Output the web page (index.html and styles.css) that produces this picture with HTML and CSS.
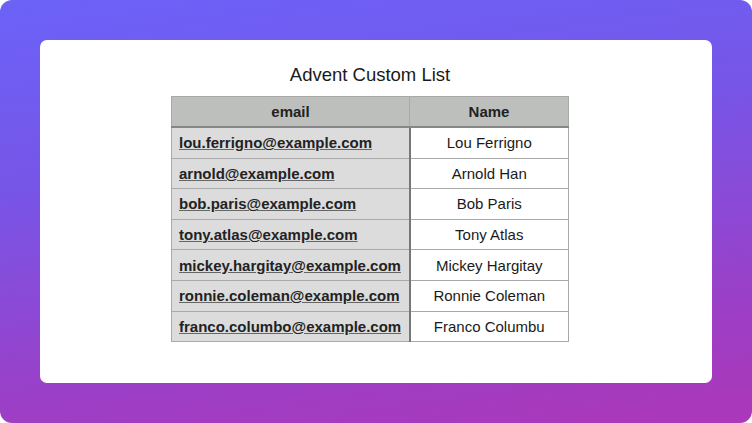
FILE: index.html
```html
<!DOCTYPE html>
<html>
<head>
<meta charset="utf-8">
<link rel="stylesheet" href="styles.css">
</head>
<body>
<div class="frame">
  <div class="card">
    <h1 class="title">Advent Custom List</h1>
    <table class="list">
      <thead>
        <tr><th class="col-email">email</th><th class="col-name">Name</th></tr>
      </thead>
      <tbody>
        <tr><td class="email"><a href="#">lou.ferrigno@example.com</a></td><td class="name">Lou Ferrigno</td></tr>
        <tr><td class="email"><a href="#">arnold@example.com</a></td><td class="name">Arnold Han</td></tr>
        <tr><td class="email"><a href="#">bob.paris@example.com</a></td><td class="name">Bob Paris</td></tr>
        <tr><td class="email"><a href="#">tony.atlas@example.com</a></td><td class="name">Tony Atlas</td></tr>
        <tr><td class="email"><a href="#">mickey.hargitay@example.com</a></td><td class="name">Mickey Hargitay</td></tr>
        <tr><td class="email"><a href="#">ronnie.coleman@example.com</a></td><td class="name">Ronnie Coleman</td></tr>
        <tr><td class="email"><a href="#">franco.columbo@example.com</a></td><td class="name">Franco Columbu</td></tr>
      </tbody>
    </table>
  </div>
</div>
</body>
</html>
```

FILE: styles.css
```css
html, body {
  margin: 0;
  padding: 0;
  background: #ffffff;
}
body {
  font-family: "Liberation Sans", Arial, Helvetica, sans-serif;
  color: #222;
}
.frame {
  width: 752px;
  height: 423px;
  box-sizing: border-box;
  padding: 40px;
  border-radius: 12px;
  background: linear-gradient(172deg, #6b62f8 0%, #7656e8 35%, #9a40c8 75%, #ad37b8 100%);
}
.card {
  height: 343px;
  box-sizing: border-box;
  padding-right: 12px;
  background: #ffffff;
  border-radius: 7px;
  display: flex;
  flex-direction: column;
  align-items: center;
}
.title {
  margin: 24px 0 0 0;
  font-size: 18.5px;
  font-weight: normal;
  line-height: 22px;
  color: #1a1a1a;
}
.list {
  margin-top: 10px;
  border-collapse: collapse;
  width: 398px;
  font-size: 15px;
  border: 1px solid #a9a9a9;
}
.list th {
  background: #bdbfbd;
  height: 29px;
  font-weight: bold;
  font-size: 15px;
  border-bottom: 2px solid #868686;
  padding: 0;
}
.list th.col-email {
  width: 237px;
  border-right: 1px solid #a9a9a9;
}
.list td {
  height: 29.6px;
  padding: 0 0 0 7px;
  border-bottom: 1px solid #a9a9a9;
  white-space: nowrap;
}
.list td.email {
  background: #dcdcdc;
  border-right: 2px solid #777;
  font-weight: bold;
}
.list td.email a {
  color: #222;
  text-decoration: underline;
  text-decoration-color: #666;
}
.list td.name {
  text-align: center;
  padding: 0;
  background: #fff;
  color: #1a1a1a;
}
```
